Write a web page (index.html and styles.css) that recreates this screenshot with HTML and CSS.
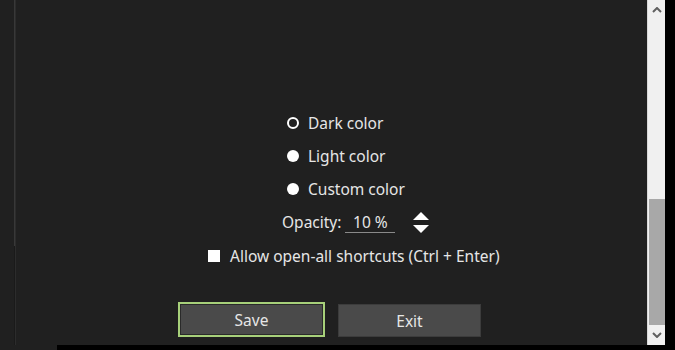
FILE: index.html
```html
<!DOCTYPE html>
<html lang="en">
<head>
    <meta charset="UTF-8">
    <title>Settings</title>
    <link rel="stylesheet" href="styles.css">
</head>
<body>
    <div class="window">
        <div class="side"></div>

        <div class="panel">
            <div class="options">
                <label class="row radio-row">
                    <span class="radio checked"></span>
                    <span>Dark color</span>
                </label>
                <label class="row radio-row">
                    <span class="radio"></span>
                    <span>Light color</span>
                </label>
                <label class="row radio-row">
                    <span class="radio"></span>
                    <span>Custom color</span>
                </label>

                <div class="row opacity-row">
                    <span>Opacity:</span>
                    <span class="opacity-value">10 %</span>
                    <span class="spinner">
                        <svg width="18" height="22" viewBox="0 0 18 22">
                            <polygon points="9,0 17,8 1,8" fill="#ffffff"/>
                            <polygon points="1,13 17,13 9,21" fill="#ffffff"/>
                        </svg>
                    </span>
                </div>

                <label class="row check-row">
                    <span class="checkbox"></span>
                    <span>Allow open-all shortcuts (Ctrl + Enter)</span>
                </label>
            </div>

            <div class="buttons">
                <button class="btn btn-save">Save</button>
                <button class="btn btn-exit">Exit</button>
            </div>
        </div>

        <!-- Scrollbar -->
        <div class="scrollbar">
            <svg class="arrow" width="10" height="6" viewBox="0 0 10 6">
                <polyline points="1,5 5,1 9,5" fill="none" stroke="#606060" stroke-width="2"/>
            </svg>
            <div class="track"></div>
            <div class="thumb"></div>
            <svg class="arrow" width="10" height="6" viewBox="0 0 10 6">
                <polyline points="1,1 5,5 9,1" fill="none" stroke="#606060" stroke-width="2"/>
            </svg>
        </div>

        <div class="edge"></div>
    </div>

    <div class="bottom">
        <div class="bottom-left"></div>
    </div>
</body>
</html>
```

FILE: styles.css
```css
* {
    margin: 0;
    padding: 0;
    box-sizing: border-box;
}

body {
    background: #000000;
    font-family: 'Noto Sans', 'Open Sans', sans-serif;
    color: #e6e6e6;
    width: 675px;
    height: 350px;
    overflow: hidden;
}

.window {
    display: flex;
    height: 345px;
}

.side {
    width: 14px;
    background: #202020;
}

/* Main panel */
.panel {
    width: 633px;
    background: #202020;
    border-left: 1px solid #1a1a1a;
    box-shadow: inset 1px 0 0 #2c2c2c;
    display: flex;
    flex-direction: column;
    position: relative;
}

.panel::before {
    content: '';
    position: absolute;
    left: -1px;
    top: 0;
    width: 1px;
    height: 246px;
    background: #383838;
}

.options {
    padding-top: 106px;
    display: flex;
    flex-direction: column;
    font-size: 15.5px;
}

.row {
    display: flex;
    align-items: center;
    height: 33px;
}

.radio-row {
    margin-left: 272px;
    gap: 9px;
}

.radio {
    width: 12px;
    height: 12px;
    border-radius: 50%;
    background: #ffffff;
}

.radio.checked {
    background: #202020;
    border: 2.5px solid #ffffff;
}

.opacity-row {
    margin-left: 267px;
}

.opacity-value {
    margin-left: 4px;
    width: 50px;
    text-align: center;
    border-bottom: 1px solid #8a8a8a;
    line-height: 20px;
    padding-top: 2px;
}

.spinner {
    margin-left: 17px;
    display: flex;
    margin-top: 2px;
}

.check-row {
    margin-left: 193px;
    gap: 10px;
    height: 35px;
}

.checkbox {
    width: 12px;
    height: 12px;
    background: #ffffff;
}

/* Buttons */
.buttons {
    display: flex;
    gap: 13px;
    margin-left: 163px;
    margin-top: 29px;
    align-items: flex-end;
}

.btn {
    font-family: inherit;
    font-size: 15.5px;
    color: #e6e6e6;
    background: #4a4a4a;
    border: 1px solid #3c3c3c;
    height: 33px;
}

.btn-save {
    width: 147px;
    height: 35px;
    border: 2px solid #a7d07a;
    box-shadow: inset 0 0 0 1px #2a2a2a;
}

.btn-exit {
    width: 143px;
}

/* Scrollbar */
.scrollbar {
    width: 18px;
    background: #f0f0f0;
    border-left: 1px solid #d8d8d8;
    display: flex;
    flex-direction: column;
    align-items: center;
}

.arrow {
    margin: 7px 0;
}

.track {
    flex: 1;
}

.thumb {
    width: 16px;
    height: 126px;
    background: #a8a8a8;
}

.edge {
    width: 10px;
    background: #000000;
}

.bottom {
    height: 5px;
    display: flex;
}

.bottom-left {
    width: 57px;
    background: #202020;
}
```
